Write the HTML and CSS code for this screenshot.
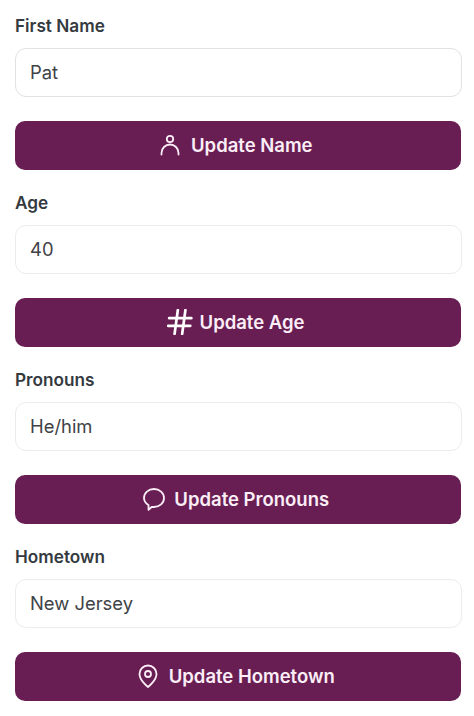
FILE: index.html
```html
<!DOCTYPE html>
<html lang="en">
<head>
  <meta charset="UTF-8" />
  <title>Profile</title>
  <link rel="stylesheet" href="styles.css">
</head>
<body>
  <form class="profile">
    <div class="field">
      <label for="name">First Name</label>
      <input type="text" id="name" class="focused" value="Pat" />
      <button type="button">
        <svg class="icon" viewBox="0 0 24 24"><circle cx="12" cy="6" r="3.200"/><path d="M3.500 21.500v-1.500a8.500 8.500 0 0 1 17 0v1.500"/></svg>
        Update Name
      </button>
    </div>
    <div class="field">
      <label for="age">Age</label>
      <input type="text" id="age" value="40" />
      <button type="button">
        <svg class="icon icon-hash" viewBox="0 0 24 24"><path d="M2 8.500h20.500M1 15.500h20.500M10 1 7 23M17 1l-3 22"/></svg>
        Update Age
      </button>
    </div>
    <div class="field">
      <label for="pronouns">Pronouns</label>
      <input type="text" id="pronouns" value="He/him" />
      <button type="button">
        <svg class="icon" viewBox="0 0 24 24"><path d="M12 2c5.600 0 10 3.900 10 9s-4.400 9-10 9c-.7 0-1.400 0-2-.2L6.500 22.800V18C3.800 16.400 2 13.900 2 11c0-5.100 4.400-9 10-9z"/></svg>
        Update Pronouns
      </button>
    </div>
    <div class="field">
      <label for="hometown">Hometown</label>
      <input type="text" id="hometown" value="New Jersey" />
      <button type="button">
        <svg class="icon" viewBox="0 0 24 24"><path d="M12 23S3.500 16.500 3.500 10a8.500 8.500 0 0 1 17 0C20.500 16.500 12 23 12 23z"/><circle cx="12" cy="10" r="3"/></svg>
        Update Hometown
      </button>
    </div>
  </form>
</body>
</html>
```

FILE: styles.css
```css
* {
  box-sizing: border-box;
}

body {
  margin: 0;
  background: #ffffff;
  font-family: 'Inter', sans-serif;
  color: #343a40;
}

.profile {
  display: flex;
  flex-direction: column;
  gap: 23.500px;
  padding: 16px 13px 16px 15px;
}

.field {
  display: flex;
  flex-direction: column;
}

label {
  height: 20px;
  margin-bottom: 12px;
  font-size: 17.200px;
  font-weight: 600;
  line-height: 20px;
}

input {
  width: calc(100% + 1px);
  height: 49px;
  margin: 0 -0.500px 24px;
  padding: 0 14.500px 2px;
  border: 1px solid #ececee;
  border-radius: 11px;
  background: #ffffff;
  font-family: inherit;
  font-size: 18.400px;
  color: #3f4347;
}

input.focused {
  border: 1.500px solid #e2e2e4;
}

button {
  display: flex;
  align-items: center;
  justify-content: center;
  gap: 8.500px;
  width: 100%;
  height: 48.500px;
  padding: 0 5px 0 0;
  border: none;
  border-radius: 10px;
  background: #691e53;
  font-family: inherit;
  font-size: 18.500px;
  font-weight: 600;
  color: #fbeef7;
  cursor: pointer;
}

.icon {
  width: 24px;
  height: 24px;
  fill: none;
  stroke: currentColor;
  stroke-width: 1.800;
  stroke-linecap: round;
  stroke-linejoin: round;
}

.icon-hash {
  width: 26px;
  height: 26px;
  margin-right: -1.500px;
  stroke-width: 2.500;
  color: #ffffff;
}
```
